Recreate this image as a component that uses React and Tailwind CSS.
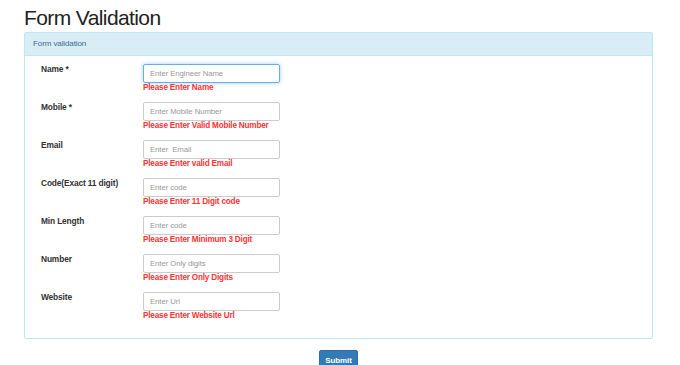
import React from 'react'

const fields = [
  { label: 'Name *', placeholder: 'Enter Engineer Name', error: 'Please Enter Name', focused: true },
  { label: 'Mobile *', placeholder: 'Enter Mobile Number', error: 'Please Enter Valid Mobile Number' },
  { label: 'Email', placeholder: 'Enter  Email', error: 'Please Enter valid Email' },
  { label: 'Code(Exact 11 digit)', placeholder: 'Enter code', error: 'Please Enter 11 Digit code' },
  { label: 'Min Length', placeholder: 'Enter code', error: 'Please Enter Minimum 3 Digit' },
  { label: 'Number', placeholder: 'Enter Only digits', error: 'Please Enter Only Digits' },
  { label: 'Website', placeholder: 'Enter Url', error: 'Please Enter Website Url' },
]

function Field({ field }) {
  return (
    <div className="flex mb-[9px]">
      <label className="w-[102px] shrink-0 text-[8.4px] leading-[11px] tracking-[-0.15px] font-bold text-[#333]">
        {field.label}
      </label>
      <div className="flex flex-col">
        <input
          type="text"
          placeholder={field.placeholder}
          className={
            field.focused
              ? 'w-[137px] h-[19px] rounded-[2px] border border-[#66afe9] px-[6px] text-[7.8px] tracking-[-0.1px] text-[#555] placeholder:text-[#999] outline-none shadow-[0_0_4px_rgba(102,175,233,0.6)]'
              : 'w-[137px] h-[19px] rounded-[2px] border border-[#ccc] px-[6px] text-[7.8px] tracking-[-0.1px] text-[#555] placeholder:text-[#999] outline-none'
          }
        />
        <span className="text-[8.2px] leading-[10px] tracking-[-0.2px] font-bold text-[#ff3333]">{field.error}</span>
      </div>
    </div>
  )
}

export default function App() {
  return (
    <div className="min-h-[365px] bg-white font-['Liberation_Sans',Arial,sans-serif]">
      <div className="pl-[24px] w-[653px]">
        <h1 className="pt-[6px] mb-[2px] text-[21px] leading-[24px] tracking-[-0.6px] text-[#222]">
          Form Validation
        </h1>
        <div className="border border-[#bce8f1] rounded-[2px]">
          <div className="h-[23px] bg-[#d9edf7] border-b border-[#bce8f1] pl-[8px] flex items-center text-[8px] tracking-[-0.1px] text-[#31708f]">
            Form validation
          </div>
          <div className="pt-[8px] pl-[16px] pb-[8px]">
            {fields.map((f) => (
              <Field key={f.label} field={f} />
            ))}
          </div>
        </div>
        <div className="flex justify-center mt-[11px]">
          <button className="w-[39px] h-[21px] rounded-[2px] bg-[#337ab7] border border-[#2e6da4] text-white text-[8px] tracking-[-0.1px] font-bold">
            Submit
          </button>
        </div>
      </div>
    </div>
  )
}
